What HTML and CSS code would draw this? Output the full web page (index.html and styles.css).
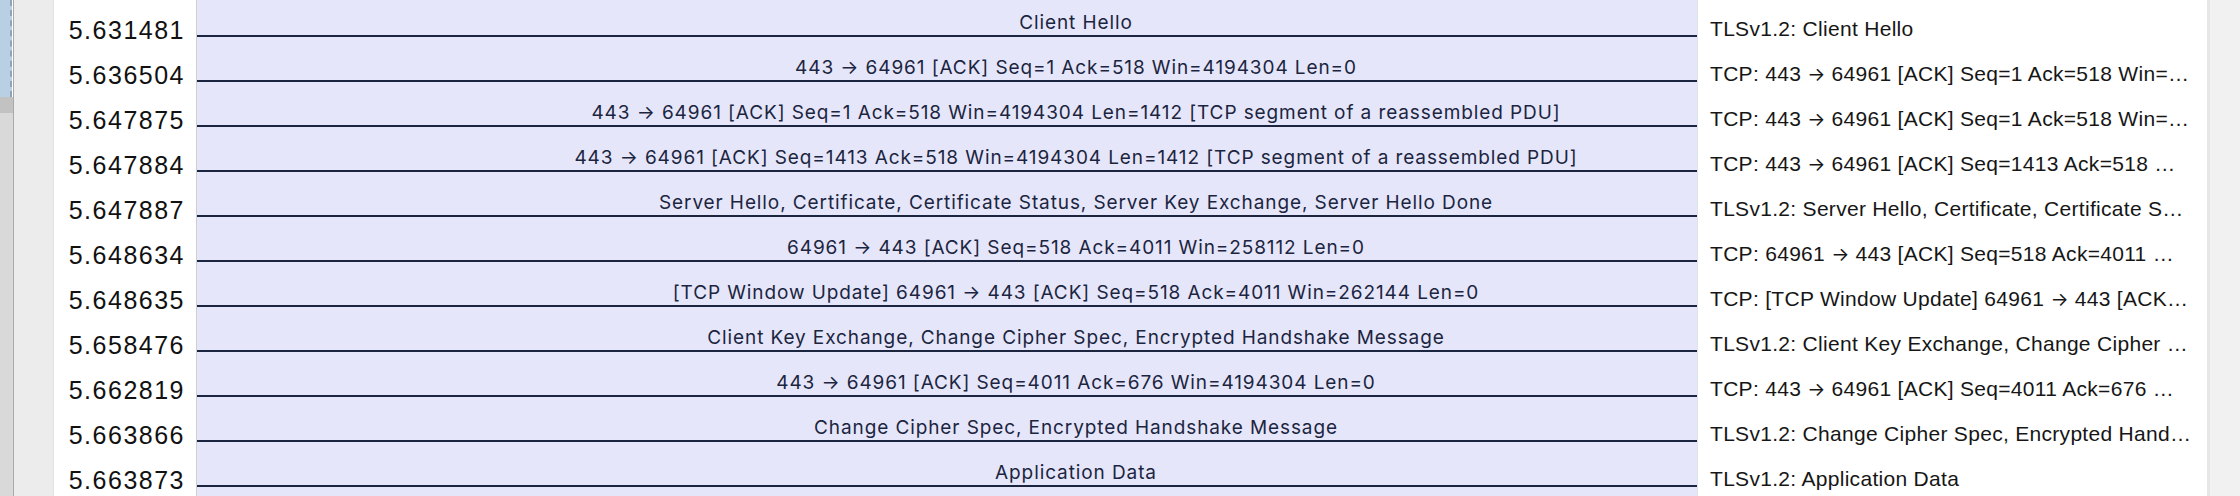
FILE: index.html
```html
<!DOCTYPE html>
<html>
<head>
<meta charset="utf-8">
<link rel="stylesheet" href="styles.css">
</head>
<body>
<div class="app">
  <div class="sidebar">
    <div class="sb-blue"></div>
    <div class="sb-band"></div>
    <div class="sb-rest"></div>
  </div>
  <div class="gutter"></div>
  <div class="table">
    <div class="list">
      <div class="row"><div class="time">5.631481</div><div class="msg"><span>Client Hello</span></div><div class="info">TLSv1.2: Client Hello</div></div>
      <div class="row"><div class="time">5.636504</div><div class="msg"><span>443 → 64961 [ACK] Seq=1 Ack=518 Win=4194304 Len=0</span></div><div class="info">TCP: 443 <span class="arr">→</span> 64961 [ACK] Seq=1 Ack=518 Win=…</div></div>
      <div class="row"><div class="time">5.647875</div><div class="msg"><span>443 → 64961 [ACK] Seq=1 Ack=518 Win=4194304 Len=1412 [TCP segment of a reassembled PDU]</span></div><div class="info">TCP: 443 <span class="arr">→</span> 64961 [ACK] Seq=1 Ack=518 Win=…</div></div>
      <div class="row"><div class="time">5.647884</div><div class="msg"><span>443 → 64961 [ACK] Seq=1413 Ack=518 Win=4194304 Len=1412 [TCP segment of a reassembled PDU]</span></div><div class="info">TCP: 443 <span class="arr">→</span> 64961 [ACK] Seq=1413 Ack=518 …</div></div>
      <div class="row"><div class="time">5.647887</div><div class="msg"><span>Server Hello, Certificate, Certificate Status, Server Key Exchange, Server Hello Done</span></div><div class="info">TLSv1.2: Server Hello, Certificate, Certificate S…</div></div>
      <div class="row"><div class="time">5.648634</div><div class="msg"><span>64961 → 443 [ACK] Seq=518 Ack=4011 Win=258112 Len=0</span></div><div class="info">TCP: 64961 <span class="arr">→</span> 443 [ACK] Seq=518 Ack=4011 …</div></div>
      <div class="row"><div class="time">5.648635</div><div class="msg"><span>[TCP Window Update] 64961 → 443 [ACK] Seq=518 Ack=4011 Win=262144 Len=0</span></div><div class="info">TCP: [TCP Window Update] 64961 <span class="arr">→</span> 443 [ACK…</div></div>
      <div class="row"><div class="time">5.658476</div><div class="msg"><span>Client Key Exchange, Change Cipher Spec, Encrypted Handshake Message</span></div><div class="info">TLSv1.2: Client Key Exchange, Change Cipher …</div></div>
      <div class="row"><div class="time">5.662819</div><div class="msg"><span>443 → 64961 [ACK] Seq=4011 Ack=676 Win=4194304 Len=0</span></div><div class="info">TCP: 443 <span class="arr">→</span> 64961 [ACK] Seq=4011 Ack=676 …</div></div>
      <div class="row"><div class="time">5.663866</div><div class="msg"><span>Change Cipher Spec, Encrypted Handshake Message</span></div><div class="info">TLSv1.2: Change Cipher Spec, Encrypted Hand…</div></div>
      <div class="row"><div class="time">5.663873</div><div class="msg"><span>Application Data</span></div><div class="info">TLSv1.2: Application Data</div></div>
      <div class="row"><div class="time"></div><div class="msg"></div><div class="info"></div></div>
    </div>
  </div>
  <div class="scroll"></div>
</div>
</body>
</html>
```
FILE: styles.css
```css
html, body {
  margin: 0;
  padding: 0;
  background: #ffffff;
}
.app {
  display: flex;
  width: 2240px;
  height: 496px;
  overflow: hidden;
}
.sidebar {
  width: 13px;
  display: flex;
  flex-direction: column;
  border-right: 1px solid #a9a9a9;
}
.sb-blue {
  height: 97px;
  background: #b9cfe3;
  box-sizing: border-box;
  border-right: 2px dashed #8ea3b8;
  margin-right: 1px;
}
.sb-band {
  height: 16px;
  background: #c2c2c2;
}
.sb-rest {
  flex: 1;
  background: #d9d9d9;
}
.gutter {
  width: 39px;
  background: #ececec;
  border-right: 1px solid #e2e2e2;
}
.table {
  width: 2153px;
  height: 496px;
  overflow: hidden;
}
.list {
  margin-top: -8px;
  display: flex;
  flex-direction: column;
}
.row {
  display: grid;
  grid-template-columns: 143px 1500px 509px;
  grid-template-rows: 45px;
  height: 45px;
  flex: none;
}
.time,
.msg,
.info {
  box-sizing: border-box;
  height: 45px;
  white-space: nowrap;
}
.time {
  border-right: 1px solid #cfcfcf;
  text-align: right;
  padding: 31px 11px 0 0;
  font-family: "Liberation Sans", Arial, sans-serif;
  font-size: 25px;
  line-height: 14px;
  letter-spacing: 1.5px;
  color: #111111;
}
.msg {
  background: #e6e6fa;
  border-bottom: 2px solid #1b2540;
  padding: 21px 0 0 258px;
  text-align: center;
  font-family: Inter, "Liberation Sans", sans-serif;
  font-size: 19px;
  line-height: 19px;
  letter-spacing: 0.9px;
  color: #1b2540;
}
.info {
  border-left: 1px solid #e2e2ec;
  padding: 28px 0 0 12px;
  font-family: "Liberation Sans", Arial, sans-serif;
  font-size: 21px;
  line-height: 17px;
  letter-spacing: 0.3px;
  color: #161616;
}
.arr {
  font-family: Inter, "DejaVu Sans", sans-serif;
  font-size: 19px;
  letter-spacing: 0;
}
.scroll {
  flex: 1;
  background: #f1f1f1;
  border-left: 3px solid #e6e6e6;
}
```
